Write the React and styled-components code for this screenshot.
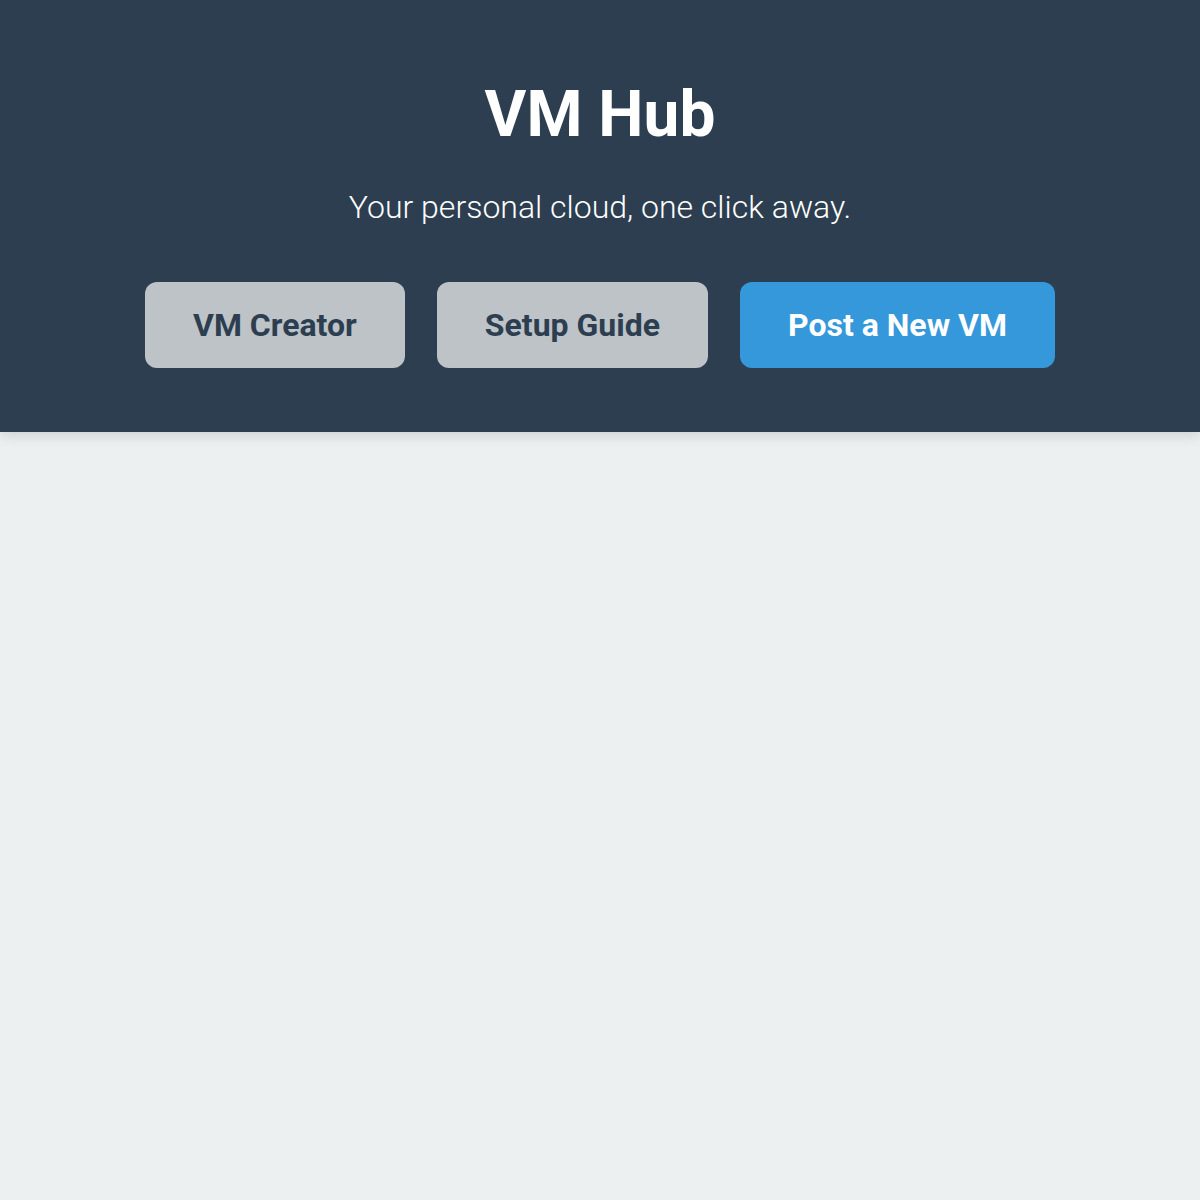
import React from "react";
import styled, { createGlobalStyle } from "styled-components";

const Global = createGlobalStyle`
  html, body { margin: 0; padding: 0; background: #ecf0f1; min-height: 100%; }
  body { font-family: Roboto, "Liberation Sans", sans-serif; min-height: 1200px; }
`;

const Header = styled.header`
  background: #2c3e50;
  color: #fff;
  padding: 77px 24px 64px;
  text-align: center;
  box-shadow: 0 4px 12px rgba(0, 0, 0, 0.12);
  position: relative;
`;

const Title = styled.h1`
  margin: 0;
  font-size: 64px;
  font-weight: 700;
  line-height: 75px;
`;

const Subtitle = styled.p`
  margin: 37px 0 0;
  font-size: 32px;
  font-weight: 300;
  line-height: 37px;
`;

const Actions = styled.div`
  display: flex;
  justify-content: center;
  gap: 32px;
  margin-top: 56px;
`;

const Button = styled.button`
  font-family: inherit;
  font-size: 32px;
  font-weight: 700;
  line-height: 38px;
  padding: 24px 48px;
  border: none;
  border-radius: 12px;
  cursor: pointer;
  background: ${(p) => (p.$primary ? "#3498db" : "#bdc3c7")};
  color: ${(p) => (p.$primary ? "#ffffff" : "#2c3e50")};
`;

export default function App() {
  return (
    <>
      <Global />
      <Header>
        <Title>VM Hub</Title>
        <Subtitle>Your personal cloud, one click away.</Subtitle>
        <Actions>
          <Button>VM Creator</Button>
          <Button>Setup Guide</Button>
          <Button $primary>Post a New VM</Button>
        </Actions>
      </Header>
    </>
  );
}
